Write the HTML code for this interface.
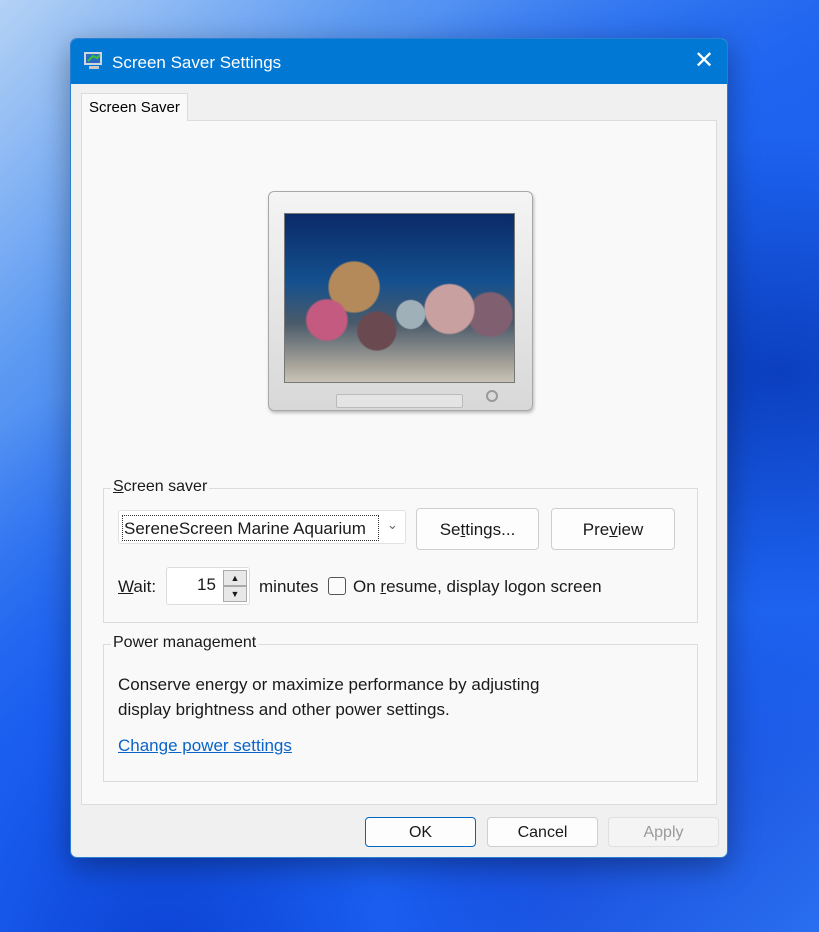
<!DOCTYPE html>
<html><head><style>
*{box-sizing:border-box;margin:0;padding:0}
body{width:819px;height:932px;overflow:hidden;position:relative;font-family:"Liberation Sans",sans-serif;
background:radial-gradient(ellipse at 20% 110%,#0a3fd0 0%,#1a5ef0 25%,transparent 45%),
radial-gradient(ellipse at 95% 40%,#0b3fbf 0%,#1d63f0 30%,transparent 55%),
linear-gradient(135deg,#b4d2f5 0%,#5a98f2 22%,#1f66ee 50%,#1448d8 75%,#2a6ef0 100%);}
.abs{position:absolute}
.win{left:70px;top:38px;width:658px;height:820px;background:#f0f0f0;border:1px solid #2b7fd0;border-radius:7px;overflow:hidden;box-shadow:0 8px 30px rgba(0,0,0,.35)}
.title{left:0;top:0;width:100%;height:45px;background:#0078d4;color:#fff;font-size:17px}
.panel{left:10px;top:81px;width:636px;height:685px;background:#f9f9f9;border:1px solid #dcdcdc}
.tab{left:10px;top:54px;width:107px;height:28px;background:#f9f9f9;border:1px solid #dcdcdc;border-bottom:none;font-size:15px;padding:5px 0 0 7px}
.grp{border:1px solid #dcdcdc;font-size:17px;color:#1a1a1a}
.lg{position:absolute;top:-11px;left:7px;background:#f9f9f9;padding:0 2px;font-size:16px}
.btn{position:absolute;background:#fdfdfd;border:1px solid #cfcfcf;border-radius:4px;font-size:16px;text-align:center;color:#1a1a1a}
u{text-decoration:underline}
</style></head><body>
<div class="abs win">
 <div class="abs title">
  <svg class="abs" style="left:12px;top:11px" width="22" height="22" viewBox="0 0 22 22"><rect x="1" y="2" width="18" height="13" fill="#cfd6de"/><rect x="3" y="4" width="14" height="9" fill="#2a6ac0"/><path d="M5 11 L10 6 L14 8 L17 5" stroke="#3bc13b" stroke-width="2" fill="none"/><rect x="6" y="16" width="10" height="3" fill="#c8c8c8"/></svg>
  <div class="abs" style="left:41px;top:14px">Screen Saver Settings</div>
  <div class="abs" style="left:623px;top:7px;font-size:24px;font-weight:300">✕</div>
 </div>
 <div class="abs panel"></div>
 <div class="abs tab">Screen Saver</div>
 <div class="abs" style="left:197px;top:152px;width:265px;height:220px;background:linear-gradient(#f4f4f4,#d8d8d8);border:1px solid #a8a8a8;border-radius:6px;box-shadow:1px 2px 3px rgba(0,0,0,.25)"></div>
 <div class="abs" style="left:213px;top:174px;width:231px;height:170px;background:linear-gradient(#0b2a68 0%,#14508e 40%,#4a5a6a 65%,#a8a49a 90%,#c8c4b8 100%);border:1px solid #777"></div>
 <div class="abs" style="left:215px;top:215px;width:227px;height:110px;background:radial-gradient(circle at 18% 60%,#c45a80 0,#c45a80 10%,transparent 11%),radial-gradient(circle at 30% 30%,#b58a5a 0,#b58a5a 14%,transparent 15%),radial-gradient(circle at 55% 55%,#a0b0b8 0,#a0b0b8 10%,transparent 11%),radial-gradient(circle at 72% 50%,#c9a0a0 0,#c9a0a0 14%,transparent 15%),radial-gradient(circle at 90% 55%,#806070 0,#806070 10%,transparent 11%),radial-gradient(circle at 40% 70%,#6a4a50 0,#6a4a50 12%,transparent 13%)"></div>
 <div class="abs" style="left:265px;top:355px;width:127px;height:14px;border:1px solid #bbb;border-radius:2px;background:#e4e4e4"></div>
 <div class="abs" style="left:415px;top:351px;width:12px;height:12px;border:2px solid #999;border-radius:50%"></div>
 <div class="abs grp" style="left:32px;top:449px;width:595px;height:135px">
  <span class="lg"><u>S</u>creen saver</span>
  <div class="abs" style="left:14px;top:21px;width:288px;height:34px;background:#fff;border:1px solid #e2e2e2;border-radius:3px">
   <div class="abs" style="left:3px;top:4px;width:257px;height:26px;border:1px dotted #333;padding:3px 0 0 1px;white-space:nowrap;overflow:hidden">SereneScreen Marine Aquarium</div>
   <div class="abs" style="left:268px;top:6px;color:#666;font-size:13px">&#8964;</div>
  </div>
  <div class="btn" style="left:312px;top:19px;width:123px;height:42px;padding-top:11px;font-size:17px">Se<u>t</u>tings...</div>
  <div class="btn" style="left:447px;top:19px;width:124px;height:42px;padding-top:11px;font-size:17px">Pre<u>v</u>iew</div>
  <div class="abs" style="left:14px;top:88px"><u>W</u>ait:</div>
  <div class="abs" style="left:62px;top:78px;width:84px;height:38px;background:#fff;border:1px solid #dcdcdc;border-radius:3px">
   <div class="abs" style="left:30px;top:7px">15</div>
   <div class="abs" style="left:56px;top:2px;width:24px;height:16px;background:#e8e8e8;border:1px solid #aaa;font-size:9px;text-align:center;line-height:14px">▲</div>
   <div class="abs" style="left:56px;top:18px;width:24px;height:16px;background:#e8e8e8;border:1px solid #aaa;font-size:9px;text-align:center;line-height:14px">▼</div>
  </div>
  <div class="abs" style="left:155px;top:88px">minutes</div>
  <div class="abs" style="left:224px;top:88px;width:18px;height:18px;border:1px solid #555;border-radius:3px;background:#fbfbfb"></div>
  <div class="abs" style="left:249px;top:88px;white-space:nowrap">On <u>r</u>esume, display logon screen</div>
 </div>
 <div class="abs grp" style="left:32px;top:605px;width:595px;height:138px">
  <span class="lg">Power management</span>
  <div class="abs" style="left:14px;top:27px;line-height:25px;white-space:nowrap">Conserve energy or maximize performance by adjusting<br>display brightness and other power settings.</div>
  <div class="abs" style="left:14px;top:91px;color:#0a64c8;text-decoration:underline">Change power settings</div>
 </div>
 <div class="btn" style="left:294px;top:778px;width:111px;height:30px;padding-top:6px;border:1px solid #0067c0">OK</div>
 <div class="btn" style="left:416px;top:778px;width:111px;height:30px;padding-top:6px">Cancel</div>
 <div class="btn" style="left:537px;top:778px;width:111px;height:30px;padding-top:6px;background:#f4f4f4;color:#9a9a9a;border-color:#e0e0e0">Apply</div>
</div>
</body></html>
